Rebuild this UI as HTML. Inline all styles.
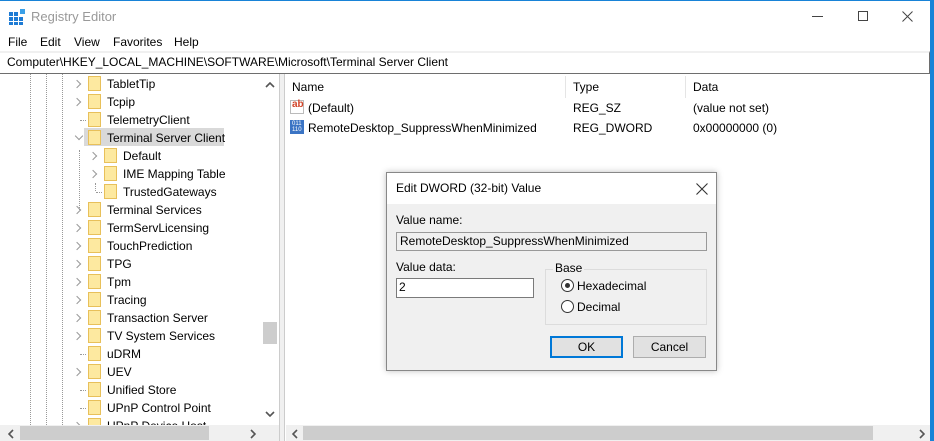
<!DOCTYPE html>
<html><head><style>
*{margin:0;padding:0;box-sizing:border-box}
body{width:934px;height:441px;overflow:hidden;background:#fff;font-family:"Liberation Sans",sans-serif;font-size:12px;color:#000;position:relative}
.abs{position:absolute}
.t{position:absolute;white-space:nowrap}
.row{position:absolute;height:18px;line-height:18px;white-space:nowrap}
.fold{position:absolute;width:13px;height:15px;background:#fde9a0;border:1px solid #e8c05a;top:2px}
.chev{position:absolute;top:4px;width:6px;height:6px;border-right:1.5px solid #999;border-bottom:1.5px solid #999;transform:rotate(-45deg)}
.dots{position:absolute;border-left:1px dotted #999}
</style></head><body>
<div class="abs" style="left:0;top:0;width:934px;height:1px;background:#1883d7"></div>
<div class="abs" style="left:930px;top:0;width:4px;height:441px;background:#1883d7"></div>
<svg class="abs" style="left:9px;top:9px" width="16" height="16"><rect x="0" y="3" width="4" height="4" fill="#1e7bd4"/><rect x="5" y="3" width="4" height="4" fill="#1e7bd4"/><rect x="0" y="8" width="4" height="4" fill="#1e7bd4"/><rect x="5" y="8" width="4" height="4" fill="#1e7bd4"/><rect x="10" y="8" width="4" height="4" fill="#1e7bd4"/><rect x="0" y="13" width="4" height="3" fill="#1e7bd4"/><rect x="5" y="13" width="4" height="3" fill="#1e7bd4"/><rect x="10" y="13" width="4" height="3" fill="#1e7bd4"/><rect x="11" y="0" width="5" height="5" fill="#3aa0e8"/></svg>
<div class="t" style="left:31px;top:9px;font-size:13px;color:#999">Registry Editor</div>
<div class="abs" style="left:812px;top:16px;width:11px;height:1px;background:#444"></div>
<div class="abs" style="left:858px;top:11px;width:10px;height:10px;border:1px solid #444"></div>
<svg class="abs" style="left:902px;top:11px" width="11" height="11"><path d="M0.5 0.5L10.5 10.5M10.5 0.5L0.5 10.5" stroke="#444" stroke-width="1"/></svg>
<div class="t" style="left:8px;top:35px">File</div>
<div class="t" style="left:40px;top:35px">Edit</div>
<div class="t" style="left:74px;top:35px">View</div>
<div class="t" style="left:113px;top:35px">Favorites</div>
<div class="t" style="left:174px;top:35px">Help</div>
<div class="abs" style="left:0;top:51px;width:930px;height:23px;border-top:2px solid #f0f0f0;border-bottom:1px solid #6e6e6e;border-right:1px solid #6e6e6e"></div>
<div class="t" style="left:7px;top:55px">Computer\HKEY_LOCAL_MACHINE\SOFTWARE\Microsoft\Terminal Server Client</div>
<div class="dots" style="left:30px;top:74px;height:351px"></div>
<div class="dots" style="left:46px;top:74px;height:351px"></div>
<div class="dots" style="left:62px;top:74px;height:351px"></div>
<div class="dots" style="left:79px;top:150px;height:60px"></div>
<div class="dots" style="left:95px;top:183px;height:8px"></div>
<div class="abs" style="left:84px;top:128px;width:140px;height:18px;background:#d9d9d9"></div>
<div id="tree"></div>
<div class="abs" style="left:262px;top:74px;width:16px;height:351px;background:#fff"></div>
<svg class="abs" style="left:265px;top:82px" width="10" height="6"><path d="M1 5L5 1L9 5" stroke="#555" stroke-width="1.6" fill="none"/></svg>
<div class="abs" style="left:263px;top:322px;width:14px;height:22px;background:#cdcdcd"></div>
<svg class="abs" style="left:265px;top:411px" width="10" height="6"><path d="M1 1L5 5L9 1" stroke="#555" stroke-width="1.6" fill="none"/></svg>
<div class="abs" style="left:279px;top:74px;width:6px;height:367px;background:#f0f0f0;border-left:1px solid #ccc;border-right:1px solid #ccc"></div>
<div class="abs" style="left:0;top:425px;width:279px;height:16px;background:#f0f0f0"></div>
<div class="abs" style="left:20px;top:426px;width:189px;height:14px;background:#cdcdcd"></div>
<svg class="abs" style="left:8px;top:429px" width="6" height="10"><path d="M5 1L1 5L5 9" stroke="#555" stroke-width="1.6" fill="none"/></svg>
<svg class="abs" style="left:250px;top:429px" width="6" height="10"><path d="M1 1L5 5L1 9" stroke="#555" stroke-width="1.6" fill="none"/></svg>
<div class="abs" style="left:286px;top:425px;width:644px;height:16px;background:#f0f0f0"></div>
<div class="abs" style="left:303px;top:426px;width:570px;height:14px;background:#cdcdcd"></div>
<svg class="abs" style="left:292px;top:429px" width="6" height="10"><path d="M5 1L1 5L5 9" stroke="#555" stroke-width="1.6" fill="none"/></svg>
<svg class="abs" style="left:919px;top:429px" width="6" height="10"><path d="M1 1L5 5L1 9" stroke="#555" stroke-width="1.6" fill="none"/></svg>
<div class="abs" style="left:565px;top:76px;width:1px;height:22px;background:#e5e5e5"></div>
<div class="abs" style="left:685px;top:76px;width:1px;height:22px;background:#e5e5e5"></div>
<div class="t" style="left:292px;top:80px">Name</div>
<div class="t" style="left:573px;top:80px">Type</div>
<div class="t" style="left:693px;top:80px">Data</div>
<div class="abs" style="left:290px;top:100px;width:14px;height:14px;border:1px solid #bbb;background:#fff"><span style="position:absolute;left:1px;top:-2px;font-size:10px;font-weight:bold;color:#d2452a">ab</span></div>
<div class="t" style="left:308px;top:101px">(Default)</div>
<div class="t" style="left:573px;top:101px">REG_SZ</div>
<div class="t" style="left:693px;top:101px">(value not set)</div>
<div class="abs" style="left:290px;top:120px;width:14px;height:14px;background:#3b74c4;color:#fff;font-size:6px;line-height:6px;padding-left:2px;padding-top:1px">011<br>110</div>
<div class="t" style="left:308px;top:121px">RemoteDesktop_SuppressWhenMinimized</div>
<div class="t" style="left:573px;top:121px">REG_DWORD</div>
<div class="t" style="left:693px;top:121px">0x00000000 (0)</div>
<div class="abs" style="left:386px;top:172px;width:331px;height:199px;border:1px solid #888;background:#f0f0f0;box-shadow:0 0 6px rgba(0,0,0,.25)">
 <div class="abs" style="left:0;top:0;width:329px;height:31px;background:#fff"></div>
 <div class="t" style="left:9px;top:8px">Edit DWORD (32-bit) Value</div>
 <svg class="abs" style="left:309px;top:10px" width="12" height="12"><path d="M0.5 0.5L11.5 11.5M11.5 0.5L0.5 11.5" stroke="#333" stroke-width="1.1"/></svg>
 <div class="t" style="left:9px;top:40px">Value name:</div>
 <div class="abs" style="left:9px;top:59px;width:311px;height:19px;border:1px solid #999;background:#f0f0f0"></div>
 <div class="t" style="left:13px;top:61px">RemoteDesktop_SuppressWhenMinimized</div>
 <div class="t" style="left:9px;top:87px">Value data:</div>
 <div class="abs" style="left:9px;top:105px;width:138px;height:20px;border:1px solid #7a7a7a;background:#fff"></div>
 <div class="t" style="left:12px;top:107px">2</div>
 <div class="abs" style="left:158px;top:96px;width:162px;height:56px;border:1px solid #dcdcdc"></div>
 <div class="t" style="left:166px;top:88px;background:#f0f0f0;padding:0 2px">Base</div>
 <div class="abs" style="left:174px;top:106px;width:13px;height:13px;border:1px solid #333;border-radius:50%;background:#fff"><div class="abs" style="left:3px;top:3px;width:5px;height:5px;border-radius:50%;background:#333"></div></div>
 <div class="t" style="left:190px;top:106px">Hexadecimal</div>
 <div class="abs" style="left:174px;top:127px;width:13px;height:13px;border:1px solid #333;border-radius:50%;background:#fff"></div>
 <div class="t" style="left:190px;top:127px">Decimal</div>
 <div class="abs" style="left:163px;top:163px;width:73px;height:22px;border:2px solid #0078d7;background:#e1e1e1;text-align:center;line-height:18px">OK</div>
 <div class="abs" style="left:246px;top:163px;width:73px;height:22px;border:1px solid #adadad;background:#e1e1e1;text-align:center;line-height:20px">Cancel</div>
</div>
<script>
var items=[["TabletTip",0,1],["Tcpip",0,1],["TelemetryClient",0,0],["Terminal Server Client",0,2],["Default",1,1],["IME Mapping Table",1,1],["TrustedGateways",1,0],["Terminal Services",0,1],["TermServLicensing",0,1],["TouchPrediction",0,1],["TPG",0,1],["Tpm",0,1],["Tracing",0,1],["Transaction Server",0,1],["TV System Services",0,1],["uDRM",0,0],["UEV",0,1],["Unified Store",0,0],["UPnP Control Point",0,0],["UPnP Device Host",0,1]];
var h="";items.forEach(function(it,i){var y=75+i*18,o=it[1]*16;
if(it[2]==1)h+='<div class="chev" style="left:'+(74+o)+'px;top:'+(y+6)+'px"></div>';
else if(it[2]==2)h+='<div class="chev" style="left:'+(76+o)+'px;top:'+(y+4)+'px;transform:rotate(45deg)"></div>';
else h+='<div class="abs" style="left:'+(80+o)+'px;top:'+(y+9)+'px;width:6px;border-top:1px dotted #999"></div>';
h+='<div class="fold" style="left:'+(88+o)+'px;top:'+(y+1)+'px"></div>';
h+='<div class="row" style="left:'+(107+o)+'px;top:'+y+'px">'+it[0]+'</div>';});
document.getElementById("tree").innerHTML=h;
</script>
</body></html>
